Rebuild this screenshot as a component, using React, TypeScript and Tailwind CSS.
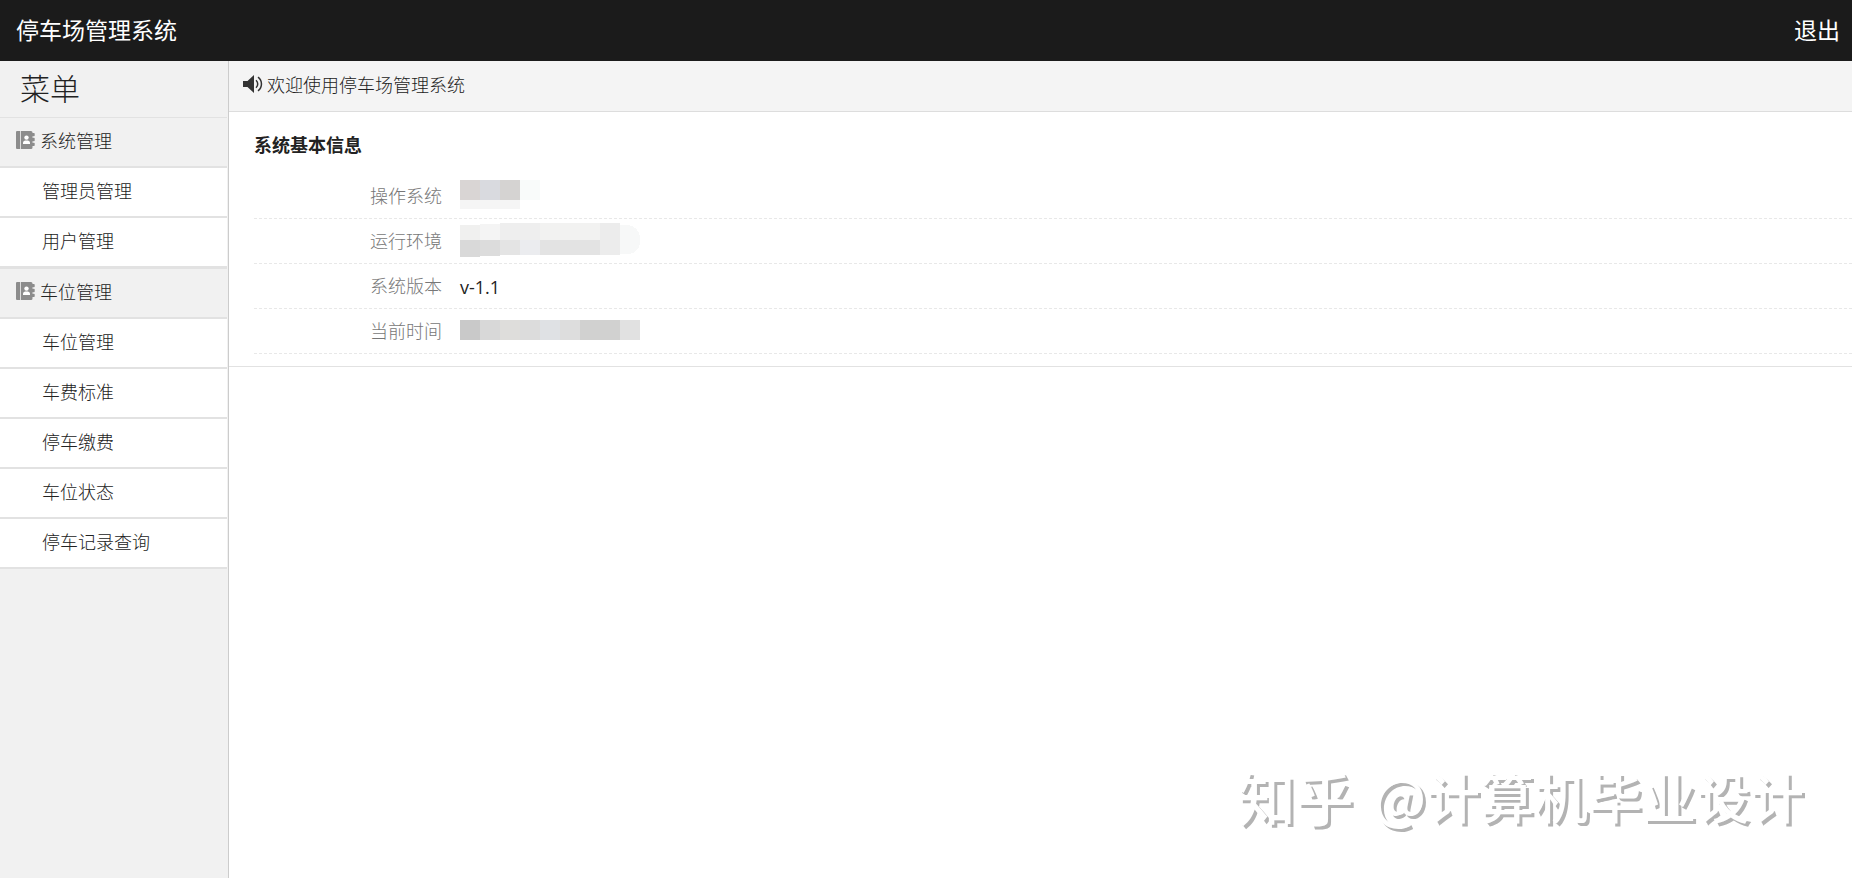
import type { ReactNode } from "react";

type MenuGroup = {
  title: string;
  items: string[];
};

type Block = {
  x: number;
  y: number;
  w: number;
  h: number;
  fill: string;
};

const menu: MenuGroup[] = [
  { title: "系统管理", items: ["管理员管理", "用户管理"] },
  {
    title: "车位管理",
    items: ["车位管理", "车费标准", "停车缴费", "车位状态", "停车记录查询"],
  },
];

const osBlocks: Block[] = [
  { x: 0, y: 6, w: 20, h: 20, fill: "#d9d5d4" },
  { x: 20, y: 6, w: 20, h: 20, fill: "#d9dadf" },
  { x: 40, y: 6, w: 20, h: 20, fill: "#d5d3d2" },
  { x: 60, y: 6, w: 20, h: 20, fill: "#f9fbfa" },
  { x: 0, y: 26, w: 60, h: 9, fill: "#f5f5f5" },
];

const envBlocks: Block[] = [
  { x: 0, y: 6, w: 20, h: 15, fill: "#f0f0ef" },
  { x: 20, y: 5, w: 20, h: 16, fill: "#f4f4f4" },
  { x: 40, y: 4, w: 40, h: 17, fill: "#eeeeee" },
  { x: 80, y: 4, w: 60, h: 17, fill: "#f2f2f1" },
  { x: 0, y: 21, w: 20, h: 17, fill: "#d9d9d9" },
  { x: 20, y: 21, w: 20, h: 16, fill: "#dcdcdc" },
  { x: 40, y: 21, w: 20, h: 15, fill: "#e4e4e4" },
  { x: 60, y: 21, w: 20, h: 15, fill: "#ebecef" },
  { x: 80, y: 21, w: 60, h: 15, fill: "#e3e3e3" },
  { x: 140, y: 4, w: 20, h: 32, fill: "#ececec" },
];

const timeBlocks: Block[] = [
  { x: 0, y: 11, w: 20, h: 20, fill: "#c9c9c9" },
  { x: 20, y: 11, w: 20, h: 20, fill: "#d8d8d8" },
  { x: 40, y: 11, w: 20, h: 20, fill: "#dedddb" },
  { x: 60, y: 11, w: 20, h: 20, fill: "#dcdcdc" },
  { x: 80, y: 11, w: 20, h: 20, fill: "#dfe1e4" },
  { x: 100, y: 11, w: 20, h: 20, fill: "#dddddd" },
  { x: 120, y: 11, w: 40, h: 20, fill: "#d1d1d0" },
  { x: 160, y: 11, w: 20, h: 20, fill: "#e1e1e1" },
];

function Mosaic({ blocks, children }: { blocks: Block[]; children?: ReactNode }) {
  return (
    <svg width="180" height="44" viewBox="0 0 180 44" shapeRendering="crispEdges" aria-hidden="true">
      {blocks.map((b) => (
        <rect key={`${b.x}-${b.y}`} x={b.x} y={b.y} width={b.w} height={b.h} fill={b.fill} />
      ))}
      {children}
    </svg>
  );
}

function BookIcon() {
  return (
    <svg width="19" height="18" viewBox="0 0 19 18" className="shrink-0" aria-hidden="true">
      <path d="M0 1a1 1 0 0 1 1-1h3v18H1a1 1 0 0 1-1-1z" fill="#8c8c8c" />
      <path
        d="M4.800 0H15a1.500 1.500 0 0 1 1.500 1.500V2H18a.7.7 0 0 1 .7.7v1.800a.7.7 0 0 1-.7.7h-1.500v1.600H18a.7.7 0 0 1 .7.7v2a.7.7 0 0 1-.7.7h-1.500v1.600H18a.7.7 0 0 1 .7.7v1.800a.7.7 0 0 1-.7.7h-1.500v1.500A1.500 1.500 0 0 1 15 18H4.800z"
        fill="#8c8c8c"
      />
      <circle cx="10.5" cy="6.600" r="2.200" fill="#fff" />
      <path d="M7 13v-1.300c0-1.700 1.500-2.300 3.500-2.300s3.500.6 3.500 2.300V13z" fill="#fff" />
    </svg>
  );
}

function VolumeIcon() {
  return (
    <svg width="20" height="18" viewBox="0 0 20 18" className="shrink-0" aria-hidden="true">
      <path d="M0 6h4.500L11 0v18l-6.500-6H0z" fill="#333" />
      <path d="M13 5.200c2.300 2 2.300 5.600 0 7.600" fill="none" stroke="#333" strokeWidth="1.500" />
      <path d="M15 2.200c4.600 3.300 4.600 10.300 0 13.600" fill="none" stroke="#333" strokeWidth="1.500" />
    </svg>
  );
}

function InfoRow({ label, children }: { label: string; children: ReactNode }) {
  return (
    <div className="flex h-[45px] items-center border-b border-dashed border-[#e8e8e8]">
      <dt className="w-[188px] shrink-0 pb-0.5 text-right font-light text-[#777]">{label}</dt>
      <dd className="ml-[18px]">{children}</dd>
    </div>
  );
}

export default function App() {
  return (
    <div className="relative flex min-h-screen flex-col bg-white font-['Noto_Sans_CJK_SC',sans-serif] text-[18px] leading-6 text-[#222]">
      <header className="flex h-[61px] items-center justify-between bg-[#1b1b1b] pr-3 pb-1 pl-4 text-[23px] text-white">
        <h1>停车场管理系统</h1>
        <a href="#logout">退出</a>
      </header>

      <div className="flex flex-1">
        <aside className="w-[229px] shrink-0 border-r border-[#ccc] bg-[#f1f1f1] pr-px">
          <h2 className="flex h-14 items-center pb-1 pl-5 text-[30px] font-light">菜单</h2>
          <nav>
            {menu.map((group) => (
              <section key={group.title} className="border-t border-[#e2e2e2]">
                <h3 className="flex h-[50px] items-center gap-[5px] border-b-2 border-[#e2e2e2] pb-1 pl-4 font-light">
                  <BookIcon />
                  {group.title}
                </h3>
                <ul>
                  {group.items.map((item) => (
                    <li key={item}>
                      <a
                        href={`#${item}`}
                        className="flex h-[50px] items-center border-b-2 border-[#e2e2e2] bg-white pb-1 pl-[42px] font-light"
                      >
                        {item}
                      </a>
                    </li>
                  ))}
                </ul>
              </section>
            ))}
          </nav>
        </aside>

        <main className="min-w-0 flex-1">
          <div className="flex h-[51px] items-center gap-1 border-b border-[#ddd] bg-[#f4f4f4] pb-1 pl-[14px] font-light">
            <VolumeIcon />
            欢迎使用停车场管理系统
          </div>

          <section className="border-b border-[#e2e2e2] pt-5 pb-3 pl-[25px]">
            <h2 className="mb-[18px] font-bold">系统基本信息</h2>
            <dl>
              <InfoRow label="操作系统">
                <Mosaic blocks={osBlocks} />
              </InfoRow>
              <InfoRow label="运行环境">
                <Mosaic blocks={envBlocks}>
                  <path d="M160 6h8q12 2 12 15t-12 14h-8z" fill="#f7f8f8" />
                </Mosaic>
              </InfoRow>
              <InfoRow label="系统版本">
                <span className="font-['Open_Sans',sans-serif]">v-1.1</span>
              </InfoRow>
              <InfoRow label="当前时间">
                <Mosaic blocks={timeBlocks} />
              </InfoRow>
            </dl>
          </section>
        </main>
      </div>

      {/* watermark */}
      <div className="pointer-events-none absolute right-12 bottom-[50px] flex items-center gap-5 leading-[64px] font-medium whitespace-nowrap text-white [text-shadow:3px_3px_0_#b3b3b3]">
        <span className="text-[58px]">知乎</span>
        <span className="text-[54px]">@计算机毕业设计</span>
      </div>
    </div>
  );
}
